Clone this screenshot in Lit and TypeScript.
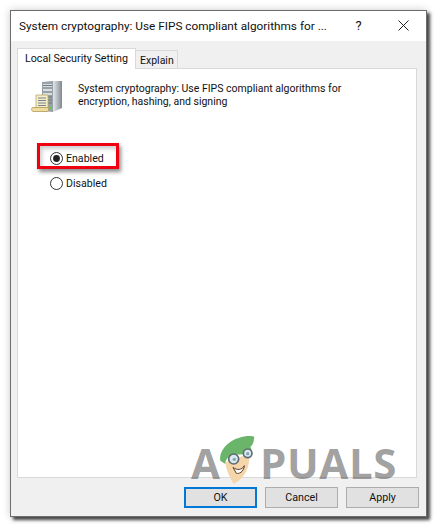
import { LitElement, html, css } from "lit";
import { customElement } from "lit/decorators.js";

@customElement("app-root")
export class AppRoot extends LitElement {
  static styles = css`
    :host { display: block; width: 438px; height: 528px; background: #fff; overflow: hidden; font-family: Roboto, "Liberation Sans", Arial, sans-serif; color: #111; }
    .stage { width: 438px; height: 528px; padding: 10px 0 0 10px; box-sizing: border-box; }
    .win { position: relative; width: 415px; height: 505px; border: 1px solid #6d6d6d; background: #f0f0f0; box-shadow: 3px 3px 3px rgba(0,0,0,.7), 0 0 8px rgba(0,0,0,.2); display: flex; flex-direction: column; }
    .title { height: 30px; background: #fff; display: flex; padding-left: 8px; font-size: 11.8px; flex: none; }
    .title .t { flex: 1; white-space: nowrap; padding-top: 8px; }
    .q { width: 46px; text-align: center; font-size: 13px; padding: 7px 0 0 3px; box-sizing: border-box; }
    .x { width: 46px; padding-top: 9px; display: flex; justify-content: center; }
    .body { flex: 1; padding: 7px 7px 0 6px; display: flex; flex-direction: column; min-height: 0; }
    .tabs { display: flex; align-items: flex-end; height: 21px; flex: none; position: relative; z-index: 1; margin-bottom: -1px; }
    .tab { box-sizing: border-box; white-space: nowrap; border: 1px solid #d9d9d9; }
    .tab.on { width: 119px; height: 21px; background: #fff; border-bottom: none; padding: 3px 0 0 7px; font-size: 10.7px; }
    .tab.off { width: 42px; height: 19px; background: #f0f0f0; border-left: none; padding: 3px 0 0 4px; font-size: 10.5px; }
    .panel { width: 400px; height: 410px; background: #fff; border: 1px solid #d9d9d9; box-sizing: border-box; padding: 11px 0 0 13px; flex: none; }
    .head { display: flex; gap: 14px; }
    .ic { width: 33px; height: 33px; flex: none; }
    .desc { font-size: 10.5px; line-height: 13px; margin-top: 2px; white-space: nowrap; }
    .radios { margin-top: 38px; margin-left: 19px; display: flex; flex-direction: column; gap: 11px; font-size: 10.6px; }
    .r { display: flex; align-items: center; gap: 3px; height: 14px; position: relative; }
    .dot { width: 13px; height: 13px; flex: none; }
    .hl { position: absolute; left: -13px; top: -8px; width: 82px; height: 26px; box-sizing: border-box; border: 3.5px solid #ee0010; box-shadow: 2px 3px 4px rgba(0,0,0,.45), inset 2px 3px 4px rgba(0,0,0,.2); pointer-events: none; }
    .foot { display: flex; justify-content: flex-end; gap: 8px; padding-top: 9px; }
    button { width: 73px; height: 21px; font: 10.7px Roboto, "Liberation Sans", Arial, sans-serif; color: #111; background: #e1e1e1; border: 1px solid #adadad; padding: 0; box-sizing: border-box; }
    button.def { border: 2px solid #0078d7; }
    .wm { position: absolute; pointer-events: none; font: 700 42px/42px "Open Sans", "Liberation Sans", sans-serif; color: rgba(70,70,70,.52); white-space: nowrap; }
    .a { left: 180px; top: 431px; }
    .p { left: 249px; top: 431px; letter-spacing: .6px; }
    .hd { left: 206px; top: 423px; width: 40px; height: 50px; }
  `;

  render() {
    return html`<div class="stage"><div class="win">
      <div class="title">
        <span class="t">System cryptography: Use FIPS compliant algorithms for ...</span>
        <span class="q">?</span>
        <span class="x"><svg width="11" height="11" viewBox="0 0 11 11"><path d="M.5.5l10 10M10.5.5l-10 10" stroke="#222" stroke-width="1" fill="none"/></svg></span>
      </div>
      <div class="body">
        <div class="tabs"><div class="tab on">Local Security Setting</div><div class="tab off">Explain</div></div>
        <div class="panel">
          <div class="head">
            <svg class="ic" viewBox="0 0 33 33">
              <defs><linearGradient id="s" x1="0" x2="1" y1="0" y2="0"><stop offset="0" stop-color="#e3e7ea"/><stop offset=".5" stop-color="#b4bbc0"/><stop offset="1" stop-color="#7f888d"/></linearGradient></defs>
              <path d="M22 1h9v27l-9 4z" fill="url(#s)"/>
              <path d="M11 2l11-1v31l-11-1z" fill="#98a1a7"/>
              <path d="M12 4h9v3h-9zM12 9h9v2h-9zM12 13h9v2h-9z" fill="#d9dee1"/>
              <path d="M12 5.5h9M12 17h9M12 20h9M12 23h9" stroke="#6f787d" stroke-width="1"/>
              <rect x="18" y="27" width="2" height="2" fill="#5fd13c"/>
              <path d="M5 15h12v13H5z" fill="#f5edc8" stroke="#bca866" stroke-width=".8"/>
              <path d="M1.5 27.5h15c1.2 0 1.5 4 0 4H2c-1.6 0-1.8-4-.5-4z" fill="#efdca0" stroke="#b39c57" stroke-width=".8"/>
              <path d="M7 18h8M7 20.5h8M7 23h8M7 25.5h8" stroke="#77848f" stroke-width="1"/>
            </svg>
            <div class="desc">System cryptography: Use FIPS compliant algorithms for<br>encryption, hashing, and signing</div>
          </div>
          <div class="radios">
            <label class="r"><svg class="dot" viewBox="0 0 13 13"><circle cx="6.5" cy="6.5" r="6" fill="#fff" stroke="#333"/><circle cx="6.5" cy="6.5" r="3.4" fill="#222"/></svg>Enabled<span class="hl"></span></label>
            <label class="r"><svg class="dot" viewBox="0 0 13 13"><circle cx="6.5" cy="6.5" r="6" fill="#fff" stroke="#333"/></svg>Disabled</label>
          </div>
        </div>
        <div class="foot"><button class="def">OK</button><button>Cancel</button><button>Apply</button></div>
      </div>
      <span class="wm a">A</span>
      <span class="wm p">PUALS</span>
      <svg class="wm hd" viewBox="140 10 120 150">
        <path d="M165 95l70-25c5 30-5 60-30 80l-15 10c-12-20-22-40-25-65z" fill="#f5d5aa"/>
        <path d="M150 90c-5-30 25-60 55-68 20-8 40-7 47-4-2 17-4 24-12 30 5 7 5 17 0 22l-50 2c-15 3-25 13-25 28z" fill="#6bb56a"/>
        <circle cx="190" cy="85" r="15" fill="#dbe9ef" stroke="#5e6b70" stroke-width="5"/>
        <circle cx="232" cy="68" r="13" fill="#dbe9ef" stroke="#5e6b70" stroke-width="5"/>
        <circle cx="192" cy="86" r="5" fill="#7fa7b8"/><circle cx="232" cy="69" r="5" fill="#7fa7b8"/>
        <path d="M188 110c12 10 27 8 34-5-2 20-17 25-24 23z" fill="#fff" stroke="#5a3c28" stroke-width="3"/>
      </svg>
    </div></div>`;
  }
}
